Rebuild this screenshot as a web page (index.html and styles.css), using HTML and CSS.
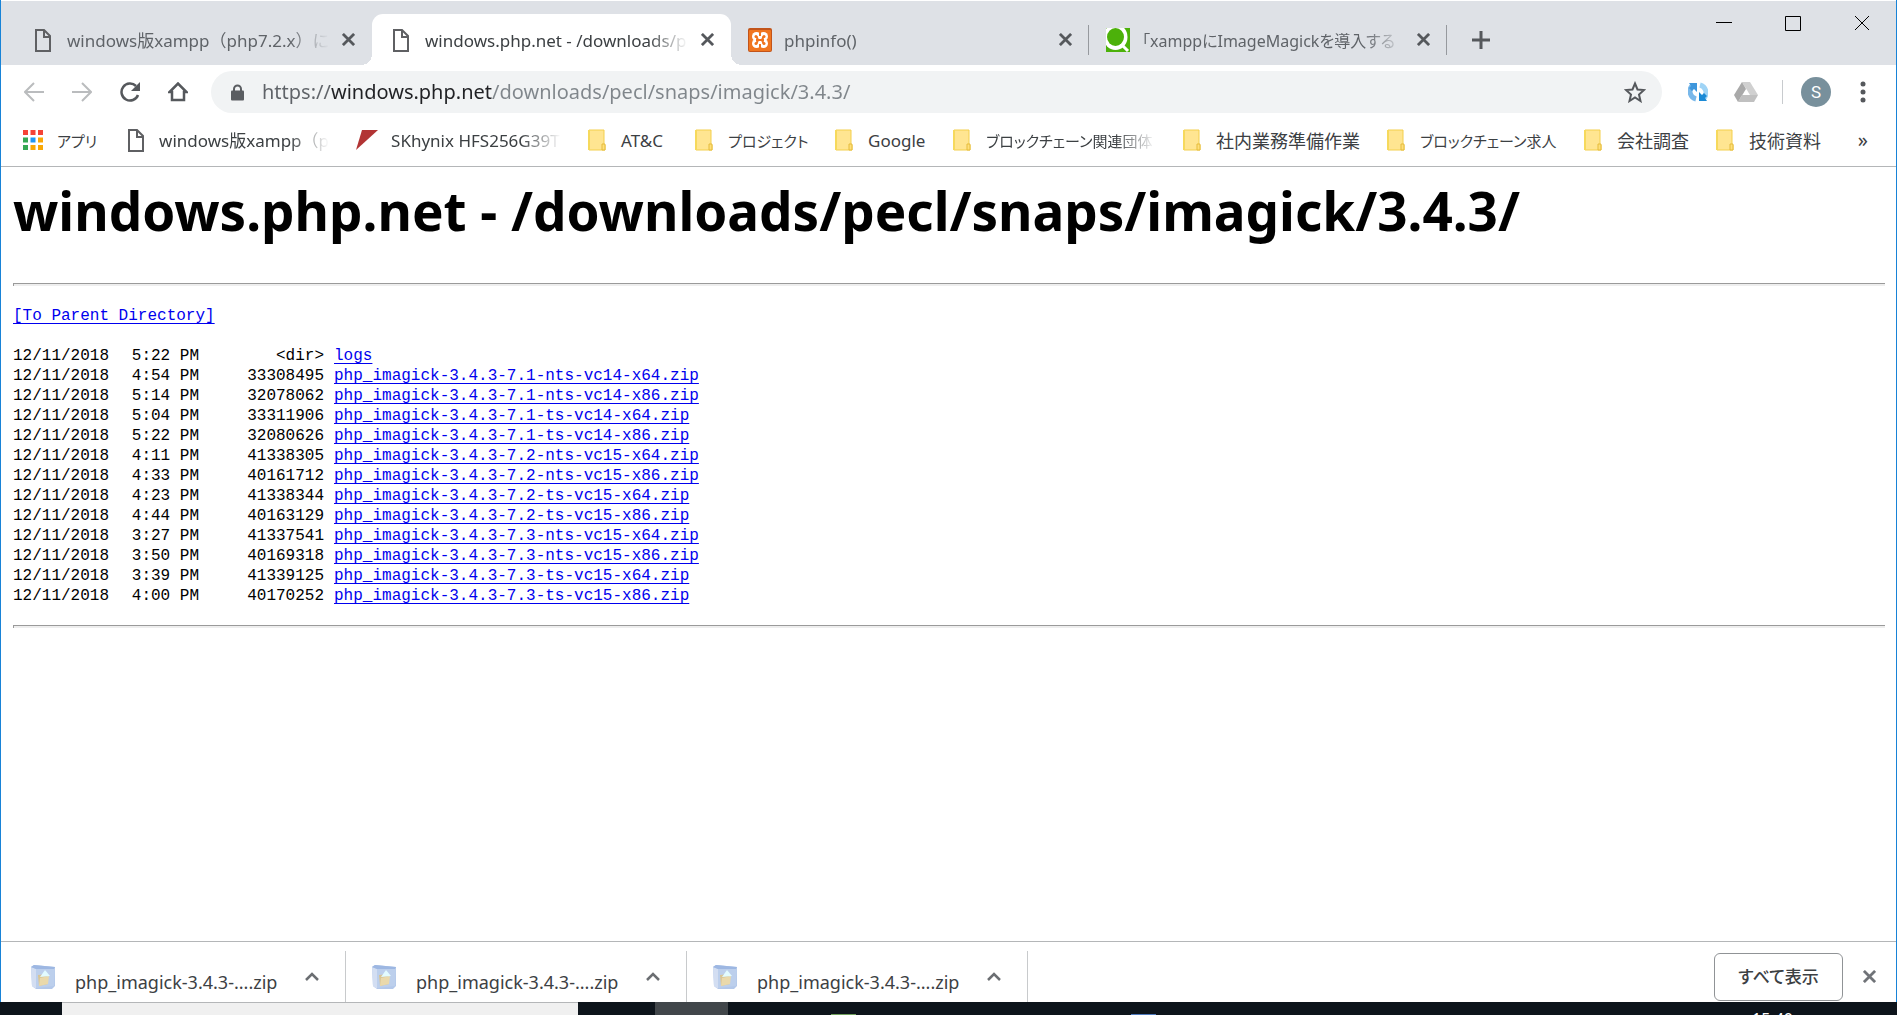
FILE: index.html
```html
<!DOCTYPE html>
<html lang="ja">
<head>
<meta charset="utf-8">
<title>windows.php.net - /downloads/pecl/snaps/imagick/3.4.3/</title>
<link rel="stylesheet" href="styles.css">
</head>
<body>
<svg class="defs" width="0" height="0" aria-hidden="true">
  <symbol id="page" viewBox="0 0 24 24"><path d="M5 2h8l6 6v15H5zM13 2v7h6" fill="none" stroke="#5f6063" stroke-width="2"/></symbol>
  <symbol id="close" viewBox="0 0 14 14"><path d="M1 1l12 12M13 1L1 13" fill="none" stroke="currentColor" stroke-width="3"/></symbol>
  <symbol id="folder" viewBox="0 0 18 22"><path d="M1 1h15v15h1v5H1z" fill="#ffe591" stroke="#f3cf4c"/><path d="M1 1v20" stroke="#f6d95c" stroke-width="2"/><path d="M14 21v-6h3v6z" fill="#ffe07a" stroke="#e5bb3c"/></symbol>
  <symbol id="chevron" viewBox="0 0 14 10"><path d="M1 8l6-6 6 6" fill="none" stroke="#6b6e72" stroke-width="2.500"/></symbol>
  <symbol id="zip" viewBox="0 0 24 24"><path d="M0 2l3-2 21 2v19l-3 3-16 0-4-3z" fill="#b3c8ea"/><path d="M0 2l5 2v20l-4-3z" fill="#d3def2"/><path d="M5 4l19-1-1 18-18 2z" fill="#bccfec"/><path d="M0 2l3-2 21 2-1 2L5 4z" fill="#9db7e2"/><path d="M7 10l9-1 1 10-9 2z" fill="#d9c595"/><path d="M9 13l9-2-1 8-9 2z" fill="#ead9ab"/><path d="M14 5l5 6-10 1z" fill="#e2fbff"/></symbol>
</svg>
<div class="window">
  <header class="tabs">
    <div class="tab">
      <svg class="favicon"><use href="#page"/></svg>
      <button class="tab-title">windows版xampp（php7.2.x）に</button>
      <button class="tab-close" aria-label="Close tab"><svg><use href="#close"/></svg></button>
    </div>
    <div class="tab active">
      <svg class="favicon"><use href="#page"/></svg>
      <button class="tab-title">windows.php.net - /downloads/p</button>
      <button class="tab-close" aria-label="Close tab"><svg><use href="#close"/></svg></button>
    </div>
    <div class="tab divided">
      <svg class="favicon" viewBox="0 0 24 24"><rect width="24" height="24" rx="2" fill="#c2541a"/><rect x="1" y="2" width="22" height="21" rx="1" fill="#f0751f"/><g fill="#fff"><circle cx="8.500" cy="8.500" r="4.500"/><circle cx="15.500" cy="8.500" r="4.500"/><circle cx="8.500" cy="15.500" r="4.500"/><circle cx="15.500" cy="15.500" r="4.500"/><path d="M7 8h10v8H7z"/></g><g fill="#f0751f"><circle cx="8" cy="8.500" r="1.500"/><circle cx="16" cy="8.500" r="1.500"/><circle cx="8" cy="15.500" r="1.500"/><circle cx="16" cy="15.500" r="1.500"/><path d="M8 11h8v2H8z"/><path d="M11 3h2v5h-2zM11 16h2v5h-2z"/></g><path d="M8.500 8.500l1.500 3.500-1.500 3.500M15.500 8.500L14 12l1.500 3.500" fill="none" stroke="#f0751f" stroke-width="2"/></svg>
      <button class="tab-title">phpinfo()</button>
      <button class="tab-close" aria-label="Close tab"><svg><use href="#close"/></svg></button>
    </div>
    <div class="tab divided">
      <svg class="favicon" viewBox="0 0 24 24"><rect width="24" height="24" fill="#4cb10a"/><ellipse cx="9.500" cy="9" rx="12" ry="13" fill="#fff"/><ellipse cx="9.500" cy="9" rx="8.500" ry="9" fill="#4cb10a"/><path d="M15 16l7 7" stroke="#fff" stroke-width="3"/></svg>
      <button class="tab-title kana-title">「xamppにImageMagickを導入する</button>
      <button class="tab-close" aria-label="Close tab"><svg><use href="#close"/></svg></button>
    </div>
    <button class="new-tab" aria-label="New tab"><svg viewBox="0 0 18 18"><path d="M9 0v18M0 9h18" stroke="#55585c" stroke-width="3"/></svg></button>
    <div class="controls">
      <button aria-label="Minimize"><svg viewBox="0 0 16 16"><path d="M0 7.500h16" stroke="#000"/></svg></button>
      <button aria-label="Maximize"><svg viewBox="0 0 16 16"><path d="M.5 1.500h15v14H.5z" fill="none" stroke="#000"/></svg></button>
      <button aria-label="Close"><svg viewBox="0 0 16 16"><path d="M1 1l14 14M15 1L1 15" stroke="#000"/></svg></button>
    </div>
  </header>

  <div class="toolbar">
    <nav class="nav">
      <button aria-label="Back"><svg viewBox="0 0 20 20"><path d="M20 10H2M10 1l-9 9 9 9" fill="none" stroke="#babcbe" stroke-width="2"/></svg></button>
      <button aria-label="Forward"><svg viewBox="0 0 20 20"><path d="M0 10h18M10 1l9 9-9 9" fill="none" stroke="#babcbe" stroke-width="2"/></svg></button>
      <button aria-label="Reload"><svg viewBox="0 0 20 20"><path d="M18 13A8.500 8.500 0 1 1 16 4" fill="none" stroke="#55585c" stroke-width="2.500"/><path d="M20 0v9h-9z" fill="#55585c"/></svg></button>
      <button aria-label="Home"><svg viewBox="0 0 20 20"><path d="M4 18V10H1.500L10 1.500 18.500 10H16v8z" fill="none" stroke="#55585c" stroke-width="2.500"/></svg></button>
    </nav>
    <div class="omnibox">
      <svg class="lock" viewBox="0 0 13 16"><path d="M3 7V4.500a3.500 3.500 0 0 1 7 0V7" fill="none" stroke="#5a5d61" stroke-width="2"/><rect y="6" width="13" height="10" rx="1" fill="#5a5d61"/></svg>
      <input class="url" type="text" aria-label="Address" value="https://windows.php.net/downloads/pecl/snaps/imagick/3.4.3/">
      <button class="star" aria-label="Bookmark"><svg viewBox="0 0 22 22"><path d="M11 2.500l2.500 6 6.500.5-5 4.500 1.500 6.500-5.500-3.500L5.500 20 7 13.500 2 9l6.500-.5z" fill="none" stroke="#55585c" stroke-width="2"/></svg></button>
    </div>
    <button class="ext" aria-label="Sync"><svg viewBox="0 0 20 20"><path d="M4 4A8 8 0 0 0 8 17" fill="none" stroke="#79b8ea" stroke-width="5"/><path d="M16 16A8 8 0 0 0 12 3" fill="none" stroke="#9fd4f6" stroke-width="5"/><path d="M1 1h8v9L6 7 4 9 1 6l2-2z" fill="#3f97dc"/><path d="M19 19h-8v-9l3 3 2-2 3 3-2 2z" fill="#1b8ad6"/></svg></button>
    <button class="ext drive" aria-label="Drive"><svg viewBox="0 0 24 20"><path d="M8 0h8l8 13h-8z" fill="#d0d0d0"/><path d="M8 0l4 7-8 13-4-7z" fill="#a9a9a9"/><path d="M8 13h16l-4 7H4z" fill="#c0c0c0"/></svg></button>
    <span class="rule"></span>
    <button class="avatar" aria-label="Profile">S</button>
    <button class="menu" aria-label="Menu"><svg viewBox="0 0 6 22"><circle cx="3" cy="3" r="2.500"/><circle cx="3" cy="11" r="2.500"/><circle cx="3" cy="19" r="2.500"/></svg></button>
  </div>

  <nav class="bookmarks">
    <a class="mark apps" href="#"><svg viewBox="0 0 20 20"><path d="M0 0h5v5H0zM7.500 0h5v5h-5zM15 0h5v5h-5z" fill="#f44336"/><path d="M0 7.500h5v5H0zM0 15h5v5H0z" fill="#34a853"/><path d="M7.500 7.500h5v5h-5z" fill="#2196f3"/><path d="M15 7.500h5v5h-5zM7.500 15h5v5h-5zM15 15h5v5h-5z" fill="#f9a806"/></svg><span class="kana">アプリ</span></a>
    <a class="mark site" href="#"><svg><use href="#page"/></svg><span class="long">windows版xampp（p</span></a>
    <a class="mark part" href="#"><svg viewBox="0 0 22 20"><path d="M6 0h16L0 20z" fill="#b23434"/></svg><span class="long">SKhynix HFS256G39T</span></a>
    <a class="mark" href="#"><svg><use href="#folder"/></svg><span class="w-atc">AT&amp;C</span></a>
    <a class="mark" href="#"><svg><use href="#folder"/></svg><span class="kana w-project">プロジェクト</span></a>
    <a class="mark" href="#"><svg><use href="#folder"/></svg><span class="w-google">Google</span></a>
    <a class="mark" href="#"><svg><use href="#folder"/></svg><span class="kana long">ブロックチェーン関連団体</span></a>
    <a class="mark" href="#"><svg><use href="#folder"/></svg><span class="kanji">社内業務準備作業</span></a>
    <a class="mark" href="#"><svg><use href="#folder"/></svg><span class="kana w-jobs">ブロックチェーン求人</span></a>
    <a class="mark" href="#"><svg><use href="#folder"/></svg><span class="kanji">会社調査</span></a>
    <a class="mark" href="#"><svg><use href="#folder"/></svg><span class="kanji">技術資料</span></a>
    <button class="more" aria-label="More bookmarks">»</button>
  </nav>

  <main class="page">
    <h1>windows.php.net - /downloads/pecl/snaps/imagick/3.4.3/</h1>
    <hr>
    <a class="parent" href="#">[To Parent Directory]</a>
    <table class="listing">
      <tr><td>12/11/2018</td><td>5:22 PM</td><td>&lt;dir&gt;</td><td><a href="#">logs</a></td></tr>
      <tr><td>12/11/2018</td><td>4:54 PM</td><td>33308495</td><td><a href="#">php_imagick-3.4.3-7.1-nts-vc14-x64.zip</a></td></tr>
      <tr><td>12/11/2018</td><td>5:14 PM</td><td>32078062</td><td><a href="#">php_imagick-3.4.3-7.1-nts-vc14-x86.zip</a></td></tr>
      <tr><td>12/11/2018</td><td>5:04 PM</td><td>33311906</td><td><a href="#">php_imagick-3.4.3-7.1-ts-vc14-x64.zip</a></td></tr>
      <tr><td>12/11/2018</td><td>5:22 PM</td><td>32080626</td><td><a href="#">php_imagick-3.4.3-7.1-ts-vc14-x86.zip</a></td></tr>
      <tr><td>12/11/2018</td><td>4:11 PM</td><td>41338305</td><td><a href="#">php_imagick-3.4.3-7.2-nts-vc15-x64.zip</a></td></tr>
      <tr><td>12/11/2018</td><td>4:33 PM</td><td>40161712</td><td><a href="#">php_imagick-3.4.3-7.2-nts-vc15-x86.zip</a></td></tr>
      <tr><td>12/11/2018</td><td>4:23 PM</td><td>41338344</td><td><a href="#">php_imagick-3.4.3-7.2-ts-vc15-x64.zip</a></td></tr>
      <tr><td>12/11/2018</td><td>4:44 PM</td><td>40163129</td><td><a href="#">php_imagick-3.4.3-7.2-ts-vc15-x86.zip</a></td></tr>
      <tr><td>12/11/2018</td><td>3:27 PM</td><td>41337541</td><td><a href="#">php_imagick-3.4.3-7.3-nts-vc15-x64.zip</a></td></tr>
      <tr><td>12/11/2018</td><td>3:50 PM</td><td>40169318</td><td><a href="#">php_imagick-3.4.3-7.3-nts-vc15-x86.zip</a></td></tr>
      <tr><td>12/11/2018</td><td>3:39 PM</td><td>41339125</td><td><a href="#">php_imagick-3.4.3-7.3-ts-vc15-x64.zip</a></td></tr>
      <tr><td>12/11/2018</td><td>4:00 PM</td><td>40170252</td><td><a href="#">php_imagick-3.4.3-7.3-ts-vc15-x86.zip</a></td></tr>
    </table>
    <hr>
  </main>

  <footer class="downloads">
    <div class="download"><svg class="zip"><use href="#zip"/></svg><button class="file">php_imagick-3.4.3-....zip</button><button class="expand" aria-label="Options"><svg><use href="#chevron"/></svg></button></div>
    <div class="download"><svg class="zip"><use href="#zip"/></svg><button class="file">php_imagick-3.4.3-....zip</button><button class="expand" aria-label="Options"><svg><use href="#chevron"/></svg></button></div>
    <div class="download"><svg class="zip"><use href="#zip"/></svg><button class="file">php_imagick-3.4.3-....zip</button><button class="expand" aria-label="Options"><svg><use href="#chevron"/></svg></button></div>
    <button class="show-all">すべて表示</button>
    <button class="dismiss" aria-label="Close downloads"><svg><use href="#close"/></svg></button>
  </footer>
</div>
<div class="taskbar">
  <div class="search"></div>
  <div class="task current"></div>
  <div class="task green"></div>
  <div class="task blue"></div>
  <time class="clock">15:40</time>
</div>
</body>
</html>
```
FILE: styles.css
```css
* { box-sizing: border-box; }

body {
  margin: 0;
  height: 100vh;
  display: flex;
  flex-direction: column;
  overflow: hidden;
  background: #fff;
  color: #3c4043;
  font: 18px/24px "Noto Sans", "Noto Sans CJK JP", sans-serif;
}

.defs { position: absolute; }
svg { display: block; flex: none; }

button {
  margin: 0;
  padding: 0;
  border: 0;
  background: none;
  color: inherit;
  font: inherit;
  display: flex;
  align-items: center;
  justify-content: center;
  flex: none;
}

.window {
  flex: 1;
  min-height: 0;
  display: flex;
  flex-direction: column;
  border: solid #1883d7;
  border-width: 0 1px;
}

/* Tab strip */
.tabs {
  height: 65px;
  flex: none;
  display: flex;
  align-items: flex-end;
  padding-left: 13px;
  border-top: 1px solid #fff;
  background: #dee1e6;
}

.tab {
  position: relative;
  flex: 0 1 358px;
  min-width: 0;
  height: 51px;
  display: flex;
  align-items: center;
  padding: 0 17px;
  color: #5f6368;
}

.tab.active {
  flex-basis: 359px;
  background: #fff;
  border-radius: 11px 11px 0 0;
  color: #3c4043;
}

.tab.active::before,
.tab.active::after {
  content: "";
  position: absolute;
  bottom: 0;
  width: 11px;
  height: 11px;
  background: radial-gradient(circle at 0 0, transparent 11px, #fff 11px);
}
.tab.active::before { right: 100%; }
.tab.active::after { left: 100%; background: radial-gradient(circle at 100% 0, transparent 11px, #fff 11px); }

.tab.divided::after {
  content: "";
  position: absolute;
  right: 0;
  top: 11px;
  width: 1px;
  height: 30px;
  background: #96999e;
}

.favicon { width: 24px; height: 24px; }

.tab-title {
  flex: 1;
  min-width: 0;
  margin: 2px 13px 0 12px;
  display: block;
  overflow: hidden;
  white-space: nowrap;
  text-align: left;
  font-size: 17px;
  -webkit-mask-image: linear-gradient(90deg, #000 calc(100% - 40px), transparent);
  mask-image: linear-gradient(90deg, #000 calc(100% - 40px), transparent);
}
.kana-title { font-size: 16px; font-feature-settings: "palt"; }

.tab-close { color: #55585c; }
.tab-close svg, .dismiss svg { width: 13px; height: 13px; }

.new-tab { width: 68px; height: 51px; }
.new-tab svg { width: 18px; height: 18px; }

.controls { margin-left: auto; align-self: flex-start; display: flex; }
.controls button { width: 69px; height: 44px; }
.controls svg { width: 16px; height: 16px; }

/* Toolbar */
.toolbar {
  height: 54px;
  flex: none;
  display: flex;
  align-items: center;
  padding: 0 30px 0 23px;
}

.nav { display: flex; gap: 28px; margin-right: 23px; }
.nav svg { width: 20px; height: 20px; }

.omnibox {
  flex: 1;
  min-width: 0;
  height: 42px;
  display: flex;
  align-items: center;
  padding: 0 16px 0 20px;
  border-radius: 21px;
  background: #f1f3f4;
}
.lock { width: 13px; height: 17px; }
.star { margin-left: 6px; }
.url {
  flex: 1;
  min-width: 0;
  height: 32px;
  margin-left: 18px;
  padding: 0;
  border: 0;
  outline: 0;
  font: 20px/32px "Noto Sans", sans-serif;
  color: transparent;
  background: linear-gradient(90deg, #5f6368 69px, #202124 69px 230px, #80868b 230px);
  -webkit-background-clip: text;
  background-clip: text;
}
.star svg { width: 22px; height: 22px; }

.ext { margin-left: 26px; }
.ext svg { width: 20px; height: 20px; }
.ext.drive svg { width: 24px; }
.rule { width: 1px; height: 24px; margin: 0 18px 0 24px; background: #c8cbce; }
.avatar {
  width: 30px;
  height: 30px;
  border-radius: 50%;
  background: #78909c;
  color: #fff;
  font: 17px/30px Roboto, sans-serif;
}
.menu { margin-left: 29px; }
.menu svg { width: 6px; height: 22px; fill: #55585c; }

/* Bookmarks bar */
.bookmarks {
  height: 48px;
  flex: none;
  display: flex;
  align-items: center;
  gap: 27px;
  padding: 0 28px 5px 22px;
  border-bottom: 1px solid #b4b6b8;
  white-space: nowrap;
}
.mark { display: flex; align-items: center; gap: 15px; color: inherit; text-decoration: none; flex: none; }
.mark svg { width: 18px; height: 22px; }
.mark span { padding-top: 2px; font-size: 17px; }
.mark .kana { font-size: 15px; font-feature-settings: "palt"; }
.mark .kanji { font-size: 18px; }
.mark .long {
  width: 170px;
  overflow: hidden;
  -webkit-mask-image: linear-gradient(90deg, #000 calc(100% - 40px), transparent);
  mask-image: linear-gradient(90deg, #000 calc(100% - 40px), transparent);
}
.mark.apps { gap: 14px; }
.mark.apps svg { width: 20px; height: 20px; }
.mark.site { gap: 11px; }
.mark.site svg { width: 24px; height: 24px; }
.mark.part { gap: 13px; }
.mark.part svg { width: 22px; height: 20px; }
.w-atc { width: 47px; }
.w-project { width: 80px; }
.w-google { width: 58px; }
.w-jobs { width: 137px; }
.more { margin-left: auto; font-size: 20px; }

/* Directory listing */
.page {
  flex: 1;
  min-height: 0;
  padding: 0 11px 0 12px;
  overflow: hidden;
  color: #000;
  font: 16px/20px "Liberation Mono", monospace;
}
.page h1 {
  margin: 8px 0 36px;
  font: bold 53px/72px "Noto Sans", sans-serif;
  white-space: nowrap;
}
.page hr {
  height: 3px;
  margin: 0;
  border: solid;
  border-width: 1px 0 0 1px;
  border-color: #9a9a9a;
  background: #eee;
}
.page a { color: #00e; text-underline-offset: 3px; }
.parent { display: block; width: max-content; margin: 20px 0; }
.listing { border-collapse: collapse; margin-bottom: 19px; white-space: pre; }
.listing td { padding: 0; height: 20px; text-align: right; }
.listing td:nth-child(2) { width: 90px; }
.listing td:nth-child(3) { width: 125px; }
.listing td:last-child { padding-left: 10px; text-align: left; }

/* Download shelf */
.downloads {
  height: 61px;
  flex: none;
  display: flex;
  align-items: flex-end;
  border-top: 1px solid #b4b6b8;
  padding: 0 20px 0 4px;
}
.download {
  flex: 0 1 341px;
  height: 51px;
  display: flex;
  align-items: center;
  padding: 0 26px;
  border-right: 1px solid #c8cacc;
}
.zip { width: 24px; height: 24px; }
.file { flex: 1; justify-content: flex-start; margin: 10px 0 0 20px; white-space: nowrap; }
.expand svg { width: 14px; height: 10px; }
.show-all {
  width: 129px;
  height: 48px;
  margin: 0 20px 1px auto;
  border: 1px solid #909396;
  border-radius: 6px;
  font-size: 17px;
  font-weight: 500;
  font-feature-settings: "palt";
}
.dismiss { height: 51px; color: #707378; }

/* Strip of the desktop taskbar */
.taskbar {
  height: 13px;
  flex: none;
  display: flex;
  align-items: flex-end;
  overflow: hidden;
  padding-left: 62px;
  background: #0d141b;
}
.search { width: 516px; height: 13px; background: #f0f0f0; border-top: 1px solid #b4b6b8; }
.task { width: 25px; height: 1px; }
.current { width: 73px; height: 13px; margin-left: 77px; background: #41464a; }
.green { margin-left: 103px; background: #6f9f5c; }
.blue { margin-left: 275px; background: #4d79bd; }
.clock { align-self: flex-start; margin: 5px 104px 0 auto; color: #fff; font-size: 16px; }
```
